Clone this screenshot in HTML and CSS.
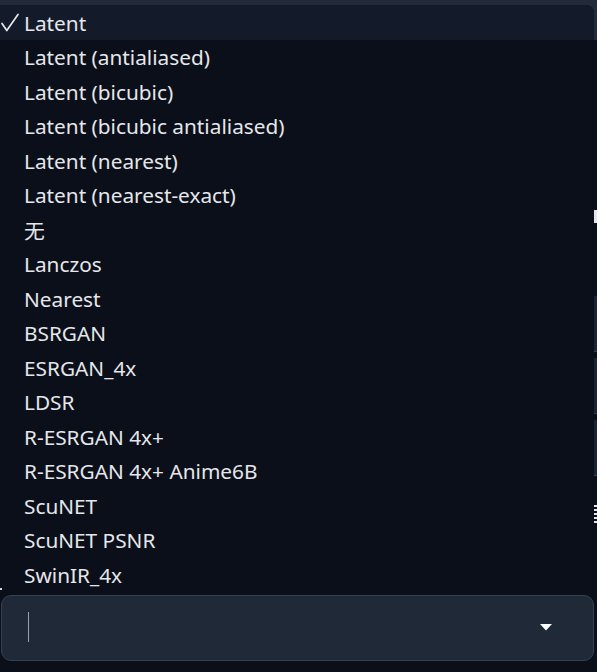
FILE: index.html
```html
<!DOCTYPE html>
<html lang="en">
<head>
<meta charset="utf-8">
<title>Upscaler dropdown</title>
<link rel="stylesheet" href="styles.css">
</head>
<body>
<div class="screen">
  <div class="topband"></div>
  <div class="stage">
    <ul class="menu">
      <li class="item selected"><svg class="check" width="20" height="20" viewBox="0 0 20 20"><path d="M2 10.5 L6.8 17.5 L18 1.5" fill="none" stroke="#e5e7eb" stroke-width="1.7" stroke-linecap="round" stroke-linejoin="round"/></svg>Latent</li>
      <li class="item">Latent (antialiased)</li>
      <li class="item">Latent (bicubic)</li>
      <li class="item">Latent (bicubic antialiased)</li>
      <li class="item">Latent (nearest)</li>
      <li class="item">Latent (nearest-exact)</li>
      <li class="item">无</li>
      <li class="item">Lanczos</li>
      <li class="item">Nearest</li>
      <li class="item">BSRGAN</li>
      <li class="item">ESRGAN_4x</li>
      <li class="item">LDSR</li>
      <li class="item">R-ESRGAN 4x+</li>
      <li class="item">R-ESRGAN 4x+ Anime6B</li>
      <li class="item">ScuNET</li>
      <li class="item">ScuNET PSNR</li>
      <li class="item">SwinIR_4x</li>
    </ul>
    <div class="strip">
      <div class="strip-top"></div>
      <div class="peek peek-white"></div>
      <div class="peek peek-box b1"></div>
      <div class="peek peek-box b2"></div>
      <div class="peek peek-box b3"></div>
      <div class="peek peek-lines"></div>
    </div>
  </div>
  <div class="below">
    <div class="dot"></div>
    <div class="input">
      <span class="caret"></span>
      <svg class="arrow" width="12" height="7" viewBox="0 0 12 7"><path d="M0 0 H12 L6 6.5 Z" fill="#ffffff"/></svg>
    </div>
  </div>
</div>
</body>
</html>
```

FILE: styles.css
```css
html, body {
  margin: 0;
  padding: 0;
  background: #0b0f19;
}
.screen {
  width: 597px;
  height: 672px;
  overflow: hidden;
  background: #0b0f19;
  font-family: "Noto Sans", "Noto Sans CJK SC", sans-serif;
  color: #e5e7eb;
}
.topband {
  height: 5px;
  background: #232a3a;
}
.stage {
  display: flex;
  background: linear-gradient(to bottom, #232a3a 0, #232a3a 35px, #0b0f19 35px);
}
.menu {
  list-style: none;
  margin: 0;
  padding: 0;
  width: 594px;
  background: #0b0f19;
  border-top-right-radius: 8px;
  overflow: hidden;
}
.item {
  height: 34.5px;
  box-sizing: border-box;
  display: flex;
  align-items: center;
  padding-left: 24px;
  padding-top: 1px;
  font-size: 20.8px;
  position: relative;
}
.item.selected {
  background: #131a2a;
}
.check {
  position: absolute;
  left: 0;
  top: 8px;
}
.strip {
  width: 3px;
  display: flex;
  flex-direction: column;
}
.strip-top {
  height: 35px;
  flex: none;
}
.peek { flex: none; }
.peek-white {
  height: 13px;
  margin-top: 170px;
  background: #e5e7eb;
}
.peek-box {
  height: 55px;
  background: #1c2433;
  border-bottom: 1px solid #374151;
}
.b1 { margin-top: 73px; }
.b2 { margin-top: 6px; }
.b3 { margin-top: 6px; }
.peek-lines {
  margin-top: 29px;
  height: 20px;
  background: repeating-linear-gradient(to bottom, #e5e7eb 0, #e5e7eb 2px, transparent 2px, transparent 4px);
}
.below {
  position: relative;
  padding-top: 3.5px;
}
.dot {
  position: absolute;
  left: 0;
  top: -4px;
  width: 2px;
  height: 2px;
  background: #d1d5db;
}
.input {
  width: 593px;
  height: 66px;
  box-sizing: border-box;
  margin-left: 1px;
  background: #1f2937;
  border: 1px solid #374151;
  border-radius: 10px;
  display: flex;
  align-items: center;
  justify-content: space-between;
  padding: 0 41px 2px 26px;
}
.caret {
  width: 1px;
  height: 30px;
  background: #9ca3af;
}
.arrow {
  display: block;
}
```
